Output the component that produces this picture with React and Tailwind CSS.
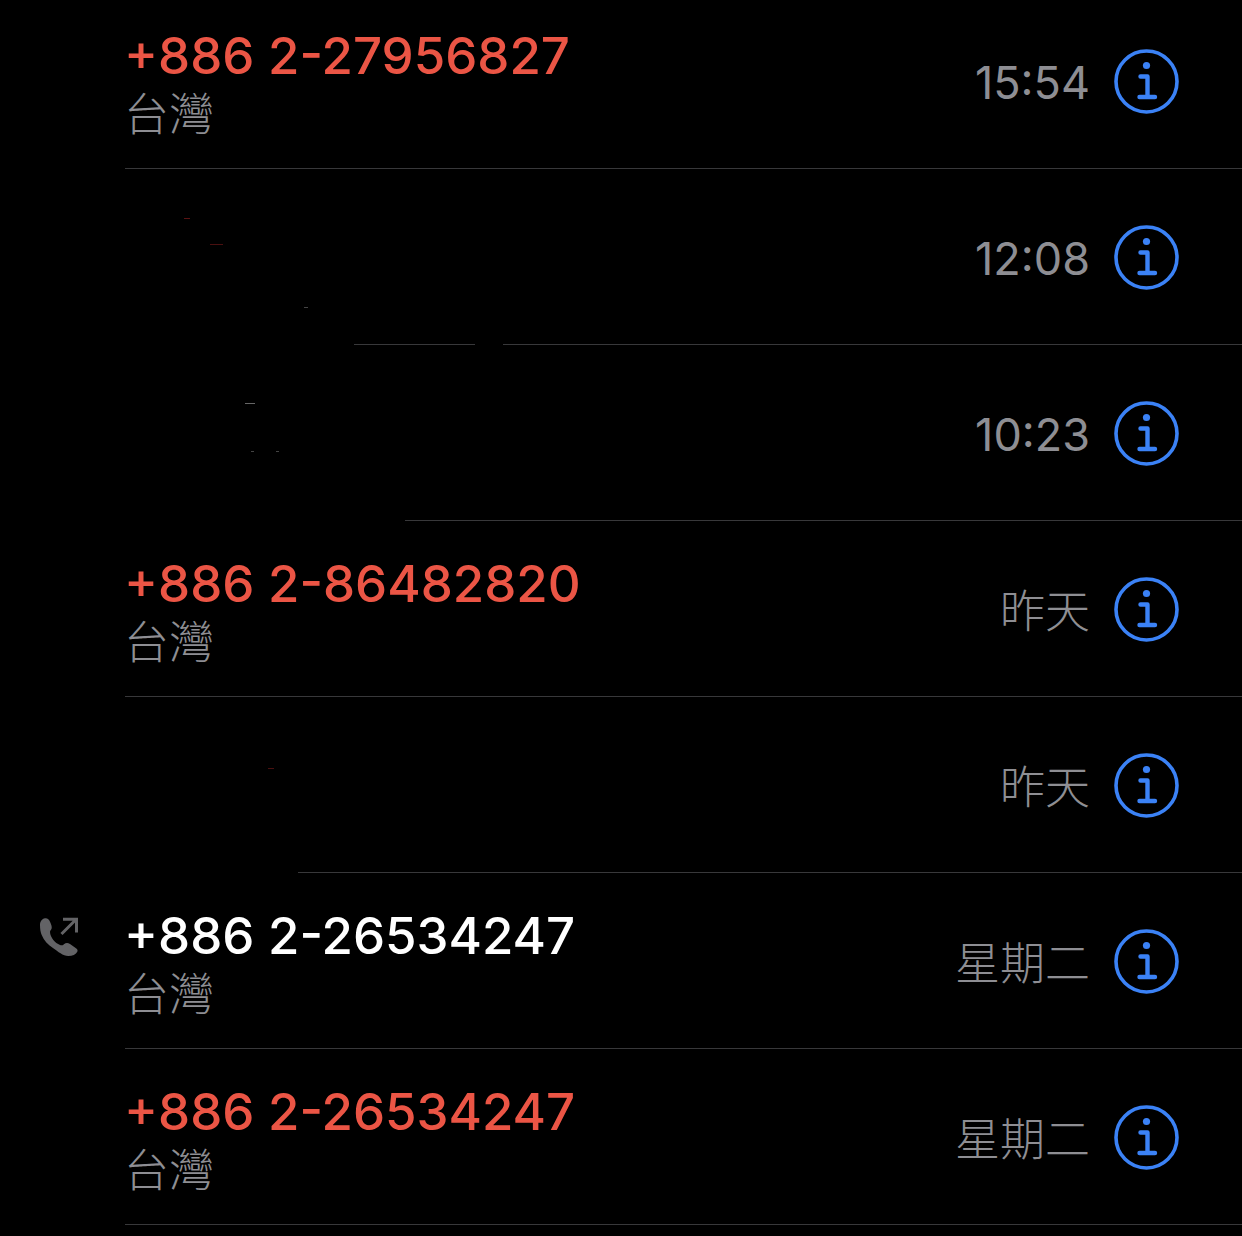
const RED = "text-[#eb5545]";

function InfoIcon() {
  return (
    <svg width="65" height="65" viewBox="0 0 65 65" className="shrink-0" fill="none">
      <circle cx="32.5" cy="32.5" r="30.5" stroke="#3b82f6" strokeWidth="3.6" />
      <circle cx="32.5" cy="16.5" r="3.6" fill="#3b82f6" />
      <path d="M26.5 27.5H33.5V47.5M25.5 48H41" stroke="#3b82f6" strokeWidth="4.4" strokeLinecap="round" strokeLinejoin="round" />
    </svg>
  );
}

function OutgoingIcon() {
  return (
    <svg width="40" height="40" viewBox="0 0 40 40" className="shrink-0">
      <path
        d="M6 1.3C3 1.8 1 4.5 1 8C1 12 1.5 15 2.7 18C5 23.5 9 28 14.3 31.3C19 34.6 24 39 29.3 39C33.5 39 37 37.5 38.3 34.7C39 33 38.3 32.2 37 31.3L31 27C28.5 25.5 26.5 26 25 27.2C23.5 28.5 22.3 28.6 21 28C18.5 27 16 25 14.3 23C12.5 20.5 11 17.5 11 14.7C11.3 13.5 12.3 12.8 12.7 11.3C13 9.5 12.3 7.5 11 4.7C10 2.5 8.5 1 6 1.3Z"
        fill="#636366"
      />
      <path d="M22.5 17L37 2.5M24 2.3H37.5V15.5" fill="none" stroke="#636366" strokeWidth="3" />
    </svg>
  );
}

function Speck({ className }) {
  return <span className={"absolute h-px " + className} />;
}

function Row({ number, missed, time, cjk, sep, outgoing, children }) {
  return (
    <div className="relative">
      <div className="flex h-[175px] items-center justify-between pt-[2px] pr-[63px]">
        <div className="flex items-center">
          <div className="-mt-[50px] flex w-[124px] shrink-0 justify-start pl-[39px]">
            {outgoing ? <OutgoingIcon /> : null}
          </div>
          {number ? (
            <div className="flex flex-col">
              <span className={"font-['Inter',sans-serif] text-[51px] font-medium leading-[56px] " + (missed ? RED : "text-white")}>
                {number}
              </span>
              <span className="mt-[4px] font-['Noto_Sans_CJK_TC',sans-serif] text-[45px] font-light leading-[48px] text-[#8e8e93]">
                台灣
              </span>
            </div>
          ) : null}
        </div>
        <div className="flex items-center gap-[24px]">
          <span
            className={
              "font-['Inter','Noto_Sans_CJK_TC',sans-serif] leading-[56px] text-[#8e8e93] " +
              (cjk ? "mt-[4px] text-[45px] font-light" : "mt-[2px] text-[45px] font-normal")
            }
          >
            {time}
          </span>
          <InfoIcon />
        </div>
      </div>
      {sep}
      {children}
    </div>
  );
}

const Line = ({ className = "ml-[125px]" }) => <div className={"h-px bg-[#38383a] " + className} />;

export default function App() {
  return (
    <div className="h-[1236px] w-[1242px] overflow-hidden bg-black">
      <div className="-mt-[7px]">
        <Row number="+886 2-27956827" missed time="15:54" sep={<Line />} />
        <Row
          time="12:08"
          sep={
            <div className="flex h-px pl-[354px]">
              <div className="h-px w-[121px] bg-[#38383a]" />
              <div className="h-px w-[28px]" />
              <div className="h-px flex-1 bg-[#38383a]" />
            </div>
          }
        >
          <Speck className="left-[184px] top-[49px] w-[6px] bg-[#5a1212]" />
          <Speck className="left-[210px] top-[75px] w-[13px] bg-[#4a1010]" />
          <Speck className="left-[304px] top-[138px] w-[4px] bg-[#444444]" />
        </Row>
        <Row time="10:23" sep={<Line className="ml-[405px]" />}>
          <Speck className="left-[245px] top-[58px] w-[10px] bg-[#666666]" />
          <Speck className="left-[251px] top-[106px] w-[3px] bg-[#444444]" />
          <Speck className="left-[276px] top-[106px] w-[3px] bg-[#444444]" />
        </Row>
        <Row number="+886 2-86482820" missed time="昨天" cjk sep={<Line />} />
        <Row time="昨天" cjk sep={<Line className="ml-[298px]" />}>
          <Speck className="left-[268px] top-[71px] w-[6px] bg-[#4a1010]" />
        </Row>
        <Row number="+886 2-26534247" outgoing time="星期二" cjk sep={<Line />} />
        <Row number="+886 2-26534247" missed time="星期二" cjk sep={<Line />} />
      </div>
    </div>
  );
}
